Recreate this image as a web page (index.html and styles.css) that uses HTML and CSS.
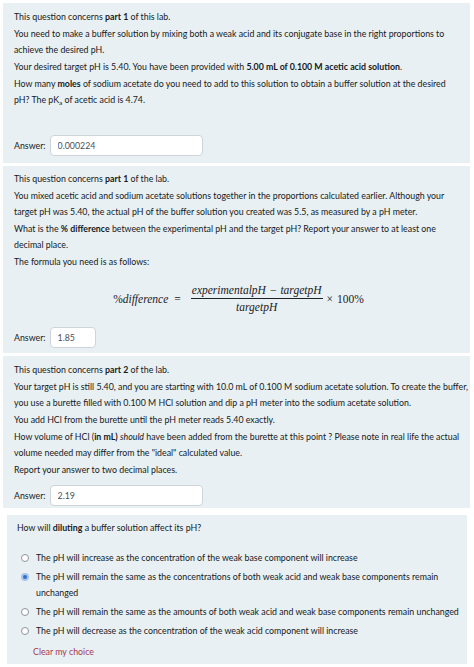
FILE: index.html
```html
<!DOCTYPE html>
<html lang="en">
<head>
<meta charset="utf-8">
<title>Buffer lab questions</title>
<link rel="stylesheet" href="styles.css">
</head>
<body>
<main class="page">
  <section class="que q1">
    <div class="qtext">
      <p>This question concerns <b>part 1</b> of this lab.</p>
      <p>You need to make a buffer solution by mixing both a weak acid and its conjugate base in the right proportions to<br>achieve the desired pH.</p>
      <p>Your desired target pH is 5.40. You have been provided with <b>5.00 mL of 0.100 M acetic acid solution</b>.</p>
      <p>How many <b>moles</b> of sodium acetate do you need to add to this solution to obtain a buffer solution at the desired<br>pH? The pK<sub>a</sub> of acetic acid is 4.74.</p>
    </div>
    <div class="answer"><label>Answer:</label><input class="field wide" type="text" value="0.000224" readonly></div>
  </section>

  <section class="que q2">
    <div class="qtext">
      <p>This question concerns <b>part 1</b> of the lab.</p>
      <p>You mixed acetic acid and sodium acetate solutions together in the proportions calculated earlier. Although your<br>target pH was 5.40, the actual pH of the buffer solution you created was 5.5, as measured by a pH meter.</p>
      <p>What is the <b>% difference</b> between the experimental pH and the target pH? Report your answer to at least one<br>decimal place.</p>
      <p>The formula you need is as follows:</p>
    </div>
    <div class="formula"><span class="lhs"><span class="up">%</span><span class="it">difference</span></span><span class="eq">=</span><span class="frac"><span class="num"><span class="it">experimentalpH</span><span class="minus">−</span><span class="it">targetpH</span></span><span class="den"><span class="it">targetpH</span></span></span><span class="times">×</span><span class="up">100%</span></div>
    <div class="answer"><label>Answer:</label><input class="field narrow" type="text" value="1.85" readonly></div>
  </section>

  <section class="que q3">
    <div class="qtext">
      <p>This question concerns <b>part 2</b> of the lab.</p>
      <p>Your target pH is still 5.40, and you are starting with 10.0 mL of 0.100 M sodium acetate solution. To create the buffer,<br>you use a burette filled with 0.100 M HCl solution and dip a pH meter into the sodium acetate solution.</p>
      <p>You add HCl from the burette until the pH meter reads 5.40 exactly.</p>
      <p>How volume of HCl (<b>in mL)</b> <i>should</i> have been added from the burette at this point ? Please note in real life the actual<br>volume needed may differ from the "ideal" calculated value.</p>
      <p>Report your answer to two decimal places.</p>
    </div>
    <div class="answer"><label>Answer:</label><input class="field wide" type="text" value="2.19" readonly></div>
  </section>

  <section class="que q4">
    <p class="prompt">How will <b>diluting</b> a buffer solution affect its pH?</p>
    <div class="options">
      <label class="opt"><input type="radio" name="dil"><span>The pH will increase as the concentration of the weak base component will increase</span></label>
      <label class="opt"><input type="radio" name="dil" checked><span>The pH will remain the same as the concentrations of both weak acid and weak base components remain<br>unchanged</span></label>
      <label class="opt"><input type="radio" name="dil"><span>The pH will remain the same as the amounts of both weak acid and weak base components remain unchanged</span></label>
      <label class="opt"><input type="radio" name="dil"><span>The pH will decrease as the concentration of the weak acid component will increase</span></label>
    </div>
    <a class="clear" href="#">Clear my choice</a>
  </section>
</main>
</body>
</html>
```

FILE: styles.css
```css
* { box-sizing: border-box; }
html, body { margin: 0; padding: 0; background: #ffffff; }
body {
  font-family: "Lato", "Open Sans", sans-serif;
  font-size: 8.8px;
  line-height: 16px;
  color: #16191c;
}
.page {
  display: flex;
  flex-direction: column;
  gap: 3px;
  padding: 3px 4px 3px 3px;
}
.que {
  background: #e8f0f3;
  padding: 6px 3px 7px 11px;
}
.qtext p { margin: 0 0 1px; white-space: nowrap; }
.qtext p:last-child { margin-bottom: 0; }
b { font-weight: 700; }
sub { font-size: 6.5px; line-height: 0; vertical-align: -2px; }

.answer {
  display: flex;
  align-items: center;
  gap: 4px;
}
.q1 .answer { margin-top: 27px; }
.q2 { padding-top: 5px; padding-bottom: 5px; }
.q2 .answer { margin-top: 13px; }
.q3 { padding-bottom: 2px; }
.q3 .answer { margin-top: 7px; }

.field {
  height: 21px;
  border: 1px solid #ced4da;
  border-radius: 4px;
  background: #ffffff;
  font: inherit;
  color: #495057;
  padding: 0 7px;
  outline: none;
}
.field.wide { width: 153px; }
.field.narrow { width: 46px; }

.formula {
  display: flex;
  align-items: center;
  justify-content: center;
  margin-top: 13px;
  padding-right: 4px;
  font-family: "Liberation Serif", "DejaVu Serif", serif;
  font-size: 11.5px;
  line-height: 14px;
  color: #1d2125;
}
.formula .it { font-style: italic; }
.formula .eq { margin: 0 10px 0 6px; }
.frac {
  display: inline-flex;
  flex-direction: column;
  align-items: center;
}
.frac .num {
  padding: 0 1px 1px;
  border-bottom: 1px solid #1d2125;
}
.frac .num .minus { margin: 0 4px; }
.frac .den { padding-top: 1px; }
.times { margin: 0 4px 0 4px; }

.q4 {
  margin: 4px 3px 0 4px;
  padding: 5px 8px 4px 10px;
}
.prompt { margin: 0; white-space: nowrap; }
.options {
  display: flex;
  flex-direction: column;
  gap: 3px;
  margin-top: 14px;
  padding-left: 4px;
}
.opt {
  display: flex;
  align-items: flex-start;
  gap: 7px;
  white-space: nowrap;
}
.opt input {
  appearance: none;
  -webkit-appearance: none;
  flex: none;
  width: 8px;
  height: 8px;
  margin: 4px 0 0;
  border: 1px solid #8f959e;
  border-radius: 50%;
  background: #ffffff;
}
.opt input:checked {
  border: 2px solid #a9c4e8;
  background: #2f6fd0;
}
.clear {
  display: inline-block;
  margin: 5px 0 0 16px;
  color: #a23a4a;
  text-decoration: none;
}
```
